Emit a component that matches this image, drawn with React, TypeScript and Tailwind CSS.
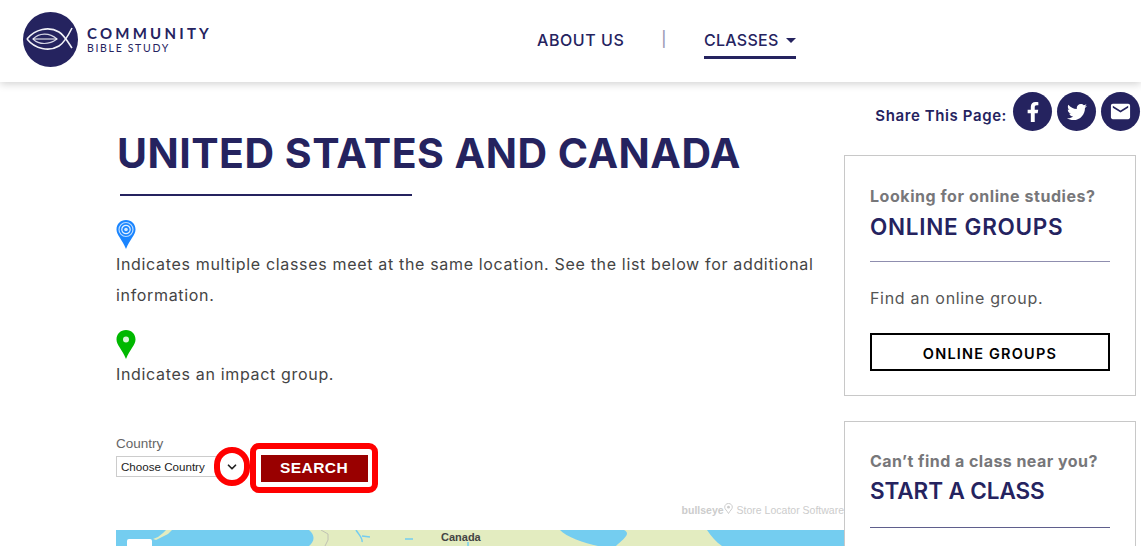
import { ChevronDown } from 'lucide-react';
import { FaFacebookF, FaTwitter } from 'react-icons/fa';
import { MdEmail } from 'react-icons/md';

const navy = 'text-[#25235f]';

function FishLogo() {
  return (
    <svg width="55" height="55" viewBox="0 0 55 55" aria-hidden="true">
      <circle cx="27.5" cy="27.5" r="27.5" fill="#25235f" />
      <path d="M4 27C12 17 26 14 36 20C41 23 45 30 49 36" fill="none" stroke="#f2f2f8" strokeWidth="1.6" />
      <path d="M4 27C12 37 26 40 36 34C41 31 45 24 49 16" fill="none" stroke="#f2f2f8" strokeWidth="1.6" />
      <path d="M10 27C16 21 26 20 34 27C26 33 16 33 10 27Z" fill="none" stroke="#d5d5e5" strokeWidth="1.2" />
      <path d="M10 27H34" fill="none" stroke="#fff" strokeWidth="1" />
    </svg>
  );
}

function BluePin() {
  return (
    <svg width="20" height="29" viewBox="0 0 20 29" aria-hidden="true">
      <path d="M10 0C4.5 0 .5 4 .5 9.5C.5 15 6 19 10 29C14 19 19.5 15 19.5 9.5C19.5 4 15.5 0 10 0Z" fill="#1a85ff" />
      <circle cx="10" cy="9.5" r="7" fill="none" stroke="#bcdcff" strokeWidth="1.2" />
      <circle cx="10" cy="9.5" r="4.2" fill="none" stroke="#e4f1ff" strokeWidth="1.2" />
      <circle cx="10" cy="9.5" r="1.8" fill="#d5e9ff" />
    </svg>
  );
}

function GreenPin() {
  return (
    <svg width="20" height="29" viewBox="0 0 20 29" aria-hidden="true">
      <path d="M10 0C4.5 0 .5 4 .5 9.5C.5 15 6 19 10 29C14 19 19.5 15 19.5 9.5C19.5 4 15.5 0 10 0Z" fill="#00b800" />
      <circle cx="10" cy="9.5" r="3" fill="#d8f5d8" />
    </svg>
  );
}

function MapStrip() {
  return (
    <svg width="728" height="16" viewBox="0 0 728 16" className="absolute inset-0" aria-hidden="true">
      <rect width="728" height="16" fill="#74cdf0" />
      <path d="M37 9L42 7L47 3L50 0H56L52 4L46 7L40 10Z" fill="#e3ecc0" />
      <path d="M193 0H444C450 7 468 13 482 16H500C506 10 516 4 508 0H591C595 6 600 12 606 16H193C198 12 200 6 193 0Z" fill="#e3ecc0" />
      <path d="M240 0C243 5 247 8 246 12M246 6L254 7M289 9H297M352 16V12" fill="none" stroke="#74cdf0" strokeWidth="1.5" />
      <path d="M205 0L212 4V10L209 16" fill="none" stroke="#b8b8b0" strokeWidth="0.8" />
    </svg>
  );
}

function ShareButton({ children }: { children: React.ReactNode }) {
  return (
    <span className="flex h-[39px] w-[39px] items-center justify-center rounded-full bg-[#25235f] text-white">
      {children}
    </span>
  );
}

export default function App() {
  return (
    <div className="h-[546px] w-[1141px] overflow-hidden bg-white font-['Inter',sans-serif]">
      <header className="relative z-10 flex h-[82px] items-center pb-[3px] shadow-[0_2px_8px_rgba(0,0,0,0.18)]">
        <div className="ml-[23px] flex w-[500px] items-center gap-[9px]">
          <FishLogo />
          <div className={`font-['Lato',sans-serif] ${navy}`}>
            <div className="text-[15px] leading-[16px] font-bold tracking-[0.215em]">COMMUNITY</div>
            <div className="mt-[1px] text-[10.5px] leading-[13px] tracking-[0.16em]">BIBLE STUDY</div>
          </div>
        </div>
        <nav className={`ml-[14px] flex items-center text-[16px] font-medium tracking-[0.035em] ${navy}`}>
          <span>ABOUT US</span>
          <span className="mx-[37px] text-[15px] text-[#9a99b5]">|</span>
          <span className="relative flex items-center gap-[8px] tracking-[0.015em]">
            CLASSES
            <span className="mt-[1px] h-0 w-0 border-x-[5.5px] border-t-[5.5px] border-x-transparent border-t-[#25235f]" />
            <span className="absolute -bottom-[7px] left-0 h-[3px] w-full bg-[#25235f]" />
          </span>
        </nav>
      </header>

      <div className="flex">
        <main className="ml-[116px] w-[728px] shrink-0">
          <h1 className={`mt-[46px] ml-[1px] text-[41px] leading-[50px] font-bold tracking-[0.012em] ${navy}`}>
            UNITED STATES AND CANADA
          </h1>
          <div className="mt-[16px] ml-[4px] h-[2px] w-[292px] bg-[#25235f]" />
          <div className="mt-[24px] flex">
            <BluePin />
          </div>
          <p className="w-[710px] text-[16px] leading-[31px] tracking-[0.67px] text-[#444]">
            Indicates multiple classes meet at the same location. See the list below for additional information.
          </p>
          <div className="mt-[19px] flex">
            <GreenPin />
          </div>
          <p className="text-[16px] leading-[31px] tracking-[0.67px] text-[#444]">
            Indicates an impact group.
          </p>

          <div className="mt-[46px] font-['Liberation_Sans',sans-serif]">
            <div className="text-[13.5px] leading-[16px] text-[#666]">Country</div>
            <div className="mt-[4px] flex items-start">
              <div className="relative flex h-[21px] w-[118px] items-center border border-[#ccc] pl-[4px] text-[11.6px] text-[#222]">
                Choose Country
                <span className="absolute top-[-10px] left-[97px] flex h-[39px] w-[36px] items-center justify-center rounded-full border-[6px] border-[#f00] bg-white">
                  <ChevronDown size={14} strokeWidth={3} className="text-[#222]" />
                </span>
              </div>
              <div className="-mt-[13px] ml-[16px] rounded-[9px] border-[6px] border-[#f00] bg-white px-[4.5px] py-[5.5px]">
                <button className="flex h-[27px] w-[107px] items-center justify-center bg-[#990000] text-[15.5px] font-bold tracking-[0.03em] text-white">
                  SEARCH
                </button>
              </div>
            </div>
            <div className="mt-[10px] flex items-center justify-end text-[10.5px] leading-[14px] text-[#ccc]">
              <span className="font-bold">bullseye</span>
              <svg width="9" height="11" viewBox="0 0 9 11" className="mr-[4px] -mt-[4px]" aria-hidden="true">
                <path d="M4.5.5C2.3.5.7 2 .7 4.2C.7 6.3 3 7.5 4.5 10.5C6 7.5 8.3 6.3 8.3 4.2C8.3 2 6.7.5 4.5.5Z" fill="none" stroke="#ccc" />
                <circle cx="4.5" cy="4.2" r="1.4" fill="#ccc" />
              </svg>
              <span>Store Locator Software</span>
            </div>
          </div>

          <div className="relative mt-[13px] h-[16px] overflow-hidden font-['Liberation_Sans',sans-serif]">
            <MapStrip />
            <span className="absolute top-[9px] left-[11px] h-[30px] w-[25px] rounded-[2px] bg-white" />
            <span className="absolute top-0 left-[325px] text-[11px] leading-[14px] font-bold text-[#444]">Canada</span>
          </div>
        </main>

        <aside className="w-[297px] shrink-0">
          <div className={`mt-[10px] flex items-center justify-end gap-[5px] pr-[1px] ${navy}`}>
            <span className="mt-[10px] mr-[1px] text-[15px] font-semibold tracking-[0.04em]">Share This Page:</span>
            <ShareButton><FaFacebookF size={20} /></ShareButton>
            <ShareButton><FaTwitter size={20} /></ShareButton>
            <ShareButton><MdEmail size={23} /></ShareButton>
          </div>

          <section className="mt-[24px] h-[241px] w-[292px] border-[1.5px] border-[#c8c8c8] px-[25px] pt-[30px]">
            <div className="text-[16px] leading-[20px] font-bold tracking-[0.55px] text-[#77777a]">Looking for online studies?</div>
            <h2 className={`mt-[8px] text-[22.5px] leading-[26px] font-semibold tracking-[0.7px] ${navy}`}>ONLINE GROUPS</h2>
            <hr className="mt-[21px] border-t border-[#8f8eaf]" />
            <p className="mt-[26px] text-[16px] leading-[20px] tracking-[0.67px] text-[#555]">Find an online group.</p>
            <button className="mt-[25px] flex h-[38px] w-full items-center justify-center border-2 border-black pt-[3px] text-[14.5px] font-semibold tracking-[1.2px] text-black">
              ONLINE GROUPS
            </button>
          </section>

          <section className="mt-[25px] h-[200px] w-[292px] border-[1.5px] border-[#c8c8c8] px-[25px] pt-[29px]">
            <div className="text-[16px] leading-[20px] font-bold tracking-[0.45px] text-[#77777a]">Can’t find a class near you?</div>
            <h2 className={`mt-[7px] text-[22.5px] leading-[26px] font-semibold tracking-[-0.1px] ${navy}`}>START A CLASS</h2>
            <hr className="mt-[23px] border-t border-[#5f5e8c]" />
          </section>
        </aside>
      </div>
    </div>
  );
}
